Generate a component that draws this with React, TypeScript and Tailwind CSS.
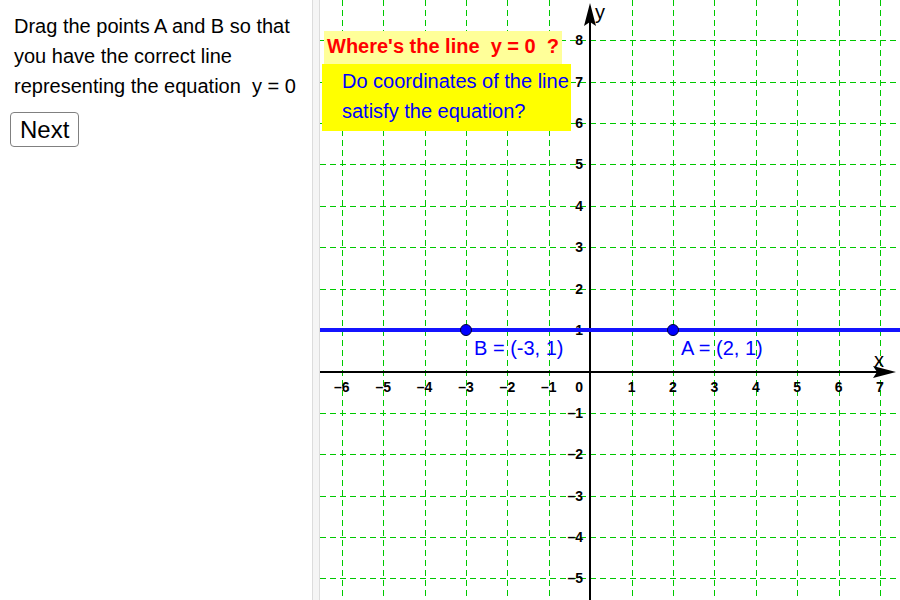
import React from 'react';

// graph geometry (px inside the graph panel)
const S = 41.4;
const OX = 270.2;
const OY = 371.4;
const X = (v: number) => OX + v * S;
const Y = (v: number) => OY - v * S;
const px = (n: number) => Math.round(n) + 0.5;

const xTicks = [-6, -5, -4, -3, -2, -1, 1, 2, 3, 4, 5, 6, 7];
const yTicks = [-5, -4, -3, -2, -1, 1, 2, 3, 4, 5, 6, 7, 8];
const num = (k: number) => (k < 0 ? `\u2013${-k}` : `${k}`);

const Graph: React.FC = () => {
  const A = { x: 2, y: 1 };
  const B = { x: -3, y: 1 };

  return (
    <svg width={580} height={600} viewBox="0 0 580 600" className="block">
      {/* grid */}
      <g stroke="#00c800" strokeWidth={1} strokeDasharray="6 4">
        {xTicks.map(k => (
          <line key={`gx${k}`} x1={px(X(k))} x2={px(X(k))} y1={0} y2={600} />
        ))}
        {yTicks.map(k => (
          <line key={`gy${k}`} x1={0} x2={580} y1={px(Y(k))} y2={px(Y(k))} />
        ))}
      </g>

      {/* axes */}
      <line x1={0} x2={560} y1={372} y2={372} stroke="#000" strokeWidth={2} />
      <path d="M576 372 L553 366 L557 372 L553 378 Z" fill="#000" />
      <line x1={270} x2={270} y1={20} y2={600} stroke="#000" strokeWidth={2} />
      <path d="M270 3 L276 26 L270 22 L264 26 Z" fill="#000" />
      <text x={275} y={19} fontSize={20} fill="#000">y</text>
      <text x={554} y={367} fontSize={20} fill="#000">x</text>

      {/* tick labels */}
      <g fontSize={14} fontWeight={700} fill="#000">
        {xTicks.map(k => (
          <text key={`tx${k}`} x={X(k)} y={392} textAnchor="middle">{num(k)}</text>
        ))}
        {yTicks.map(k => (
          <text key={`ty${k}`} x={263} y={Y(k) + 5} textAnchor="end">{num(k)}</text>
        ))}
        <text x={263} y={392} textAnchor="end">0</text>
      </g>

      {/* the line through A and B */}
      <line x1={0} x2={580} y1={Y(1)} y2={Y(1)} stroke="#1414ff" strokeWidth={4} />
      <circle cx={X(B.x)} cy={Y(B.y)} r={5.5} fill="#0000ff" stroke="#000033" strokeWidth={1} />
      <circle cx={X(A.x)} cy={Y(A.y)} r={5.5} fill="#0000ff" stroke="#000033" strokeWidth={1} />
      <text x={154} y={355} fontSize={20} fill="#0000ff">B = (-3, 1)</text>
      <text x={361} y={355} fontSize={20} fill="#0000ff">A = (2, 1)</text>
    </svg>
  );
};

export default function App() {
  return (
    <div className="flex h-[600px] w-[900px] overflow-hidden bg-white font-['Liberation_Sans',Arial,sans-serif]">
      {/* instructions */}
      <div className="w-[312px] shrink-0 pl-[10px] pt-[11px]">
        <p className="pl-[4px] text-[20px] leading-[30px] text-black whitespace-pre">
          {'Drag the points A and B so that\nyou have the correct line\nrepresenting the equation  y = 0'}
        </p>
        <button className="mt-[11px] h-[35px] rounded-[4px] border border-[#808080] bg-white px-[9px] text-[24px] leading-[33px] text-black">
          Next
        </button>
      </div>

      {/* splitter */}
      <div className="w-[8px] shrink-0 border-x border-[#dcdcdc] bg-[#f5f5f5]" />

      {/* graphics view */}
      <div className="relative flex-1">
        <Graph />

        <div className="absolute left-[4px] top-[31px] h-[33px] w-[238px] bg-[#ffff99] pl-[3px] text-[20px] font-bold leading-[30px] text-[#ff0000] whitespace-pre">
          {"Where's the line  y = 0  ?"}
        </div>
        <div className="absolute left-[2px] top-[64px] h-[67px] w-[249px] bg-[#ffff00] pl-[20px] pt-[2px] text-[20px] leading-[30px] text-[#0000ff]">
          <div>Do coordinates of the line</div>
          <div>satisfy the equation?</div>
        </div>
      </div>
    </div>
  );
}
